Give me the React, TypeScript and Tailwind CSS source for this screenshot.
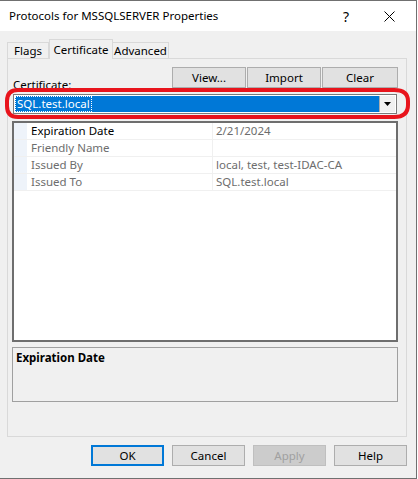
import React from "react";

const font = { fontFamily: '"Segoe UI", "Noto Sans", "Open Sans", sans-serif' };

function Btn({
  children,
  className = "",
  variant = "normal",
}: {
  children: React.ReactNode;
  className?: string;
  variant?: "normal" | "default" | "disabled";
}) {
  const v =
    variant === "default"
      ? "border-2 border-[#0078d7] bg-[#e1e1e1] text-black"
      : variant === "disabled"
      ? "border border-[#bfbfbf] bg-[#cccccc] text-[#a0a0a0]"
      : "border border-[#adadad] bg-[#e1e1e1] text-black";
  return (
    <div className={"flex h-[21px] items-center justify-center text-[11.5px] leading-none " + v + " " + className}>
      {children}
    </div>
  );
}

const rows = [
  { name: "Expiration Date", value: "2/21/2024", sel: true },
  { name: "Friendly Name", value: "", sel: false },
  { name: "Issued By", value: "local, test, test-IDAC-CA", sel: false },
  { name: "Issued To", value: "SQL.test.local", sel: false },
];

export default function App() {
  return (
    <div className="relative h-[479px] w-[418px] overflow-hidden bg-white" style={font}>
      <div className="flex h-[479px] w-[417px] flex-col border-b border-r border-t border-[#707070] bg-[#f0f0f0]">
        {/* title bar */}
        <div className="flex h-[30px] items-center bg-white text-[11.5px] text-black">
          <span className="pl-[9px]">Protocols for MSSQLSERVER Properties</span>
          <span className="ml-auto mr-[35px] text-[14px]">?</span>
          <svg width="11" height="11" viewBox="0 0 11 11" className="mr-[21px]">
            <path d="M0.5 0.5 L10.5 10.5 M10.5 0.5 L0.5 10.5" stroke="#000" strokeWidth="1" />
          </svg>
        </div>
        {/* tabs */}
        <div className="flex h-[27px] items-end pl-[7px] text-[11.5px] text-black">
          <div className="mb-[-1px] flex h-[17px] w-[42px] items-center justify-center border border-b-0 border-[#d9d9d9] bg-[#f0f0f0]">
            Flags
          </div>
          <div className="relative z-10 mb-[-1px] flex h-[20px] w-[64px] items-start justify-center border border-b-0 border-[#d9d9d9] bg-[#f0f0f0] pt-[1px]">
            Certificate
          </div>
          <div className="mb-[-1px] flex h-[17px] w-[56px] items-center justify-center border border-b-0 border-l-0 border-[#d9d9d9] bg-[#f0f0f0]">
            Advanced
          </div>
        </div>
        {/* panel */}
        <div className="mx-[7px] flex h-[379px] w-[400px] flex-col border border-[#d9d9d9] bg-[#f0f0f0] px-[4px]">
          <div className="mt-[7px] flex h-[22px] items-end">
            <span className="mb-[-2px] pl-[1px] text-[11.5px] leading-none text-black">Certificate:</span>
            <div className="ml-auto mr-[4px] flex gap-[1px]">
              <Btn className="w-[74px]">View...</Btn>
              <Btn className="w-[74px]">Import</Btn>
              <Btn className="w-[76px]">Clear</Btn>
            </div>
          </div>
          {/* combobox */}
          <div className="ml-[1px] mt-[6px] flex h-[20px] w-[384px] items-stretch border border-[#7a7a7a] bg-white p-[1px]">
            <div className="flex flex-1 items-center bg-[#0078d7]">
              <span className="border border-dotted border-white px-[1px] text-[11.5px] leading-[14px] text-white">
                SQL.test.local
              </span>
            </div>
            <div className="flex w-[16px] items-center justify-center border-l border-[#adadad] bg-[#f0f0f0]">
              <svg width="7" height="4" viewBox="0 0 7 4">
                <path d="M0 0 H7 L3.5 4 Z" fill="#000" />
              </svg>
            </div>
          </div>
          {/* listbox */}
          <div className="mt-[7px] flex h-[221px] w-[386px] flex-col border-2 border-[#6e6e6e] bg-white">
            {rows.map((r) => (
              <div key={r.name} className="flex h-[17px] border-b border-[#f0f0f0] text-[11.5px]">
                <div className="w-[13px] bg-[#eef3fa]" />
                <div
                  className={
                    "flex w-[186px] items-center border-r border-[#f0f0f0] pl-[4px] " +
                    (r.sel ? "text-black" : "text-[#6d6d6d]")
                  }
                >
                  {r.name}
                </div>
                <div className="flex flex-1 items-center pl-[3px] text-[#6d6d6d]">{r.value}</div>
              </div>
            ))}
          </div>
          {/* description */}
          <div className="mt-[5px] h-[55px] w-[386px] border border-[#a0a0a0] bg-[#f0f0f0] px-[3px] pt-[4px] text-[11.5px] font-bold leading-none text-black">
            Expiration Date
          </div>
        </div>
        {/* bottom buttons */}
        <div className="mt-[8px] flex justify-end gap-[8px] pr-[9px]">
          <Btn className="w-[73px]" variant="default">OK</Btn>
          <Btn className="w-[73px]">Cancel</Btn>
          <Btn className="w-[73px]" variant="disabled">Apply</Btn>
          <Btn className="w-[73px]">Help</Btn>
        </div>
      </div>
      {/* red annotation */}
      <svg className="pointer-events-none absolute left-0 top-0" width="418" height="479">
        <path
          d="M18 90 H394 Q408 90 408 101 V105 Q408 117 394 117 H18 Q7 117 7 106 V101 Q7 90 18 90 Z"
          fill="none"
          stroke="#e8141c"
          strokeWidth="4"
        />
      </svg>
    </div>
  );
}
